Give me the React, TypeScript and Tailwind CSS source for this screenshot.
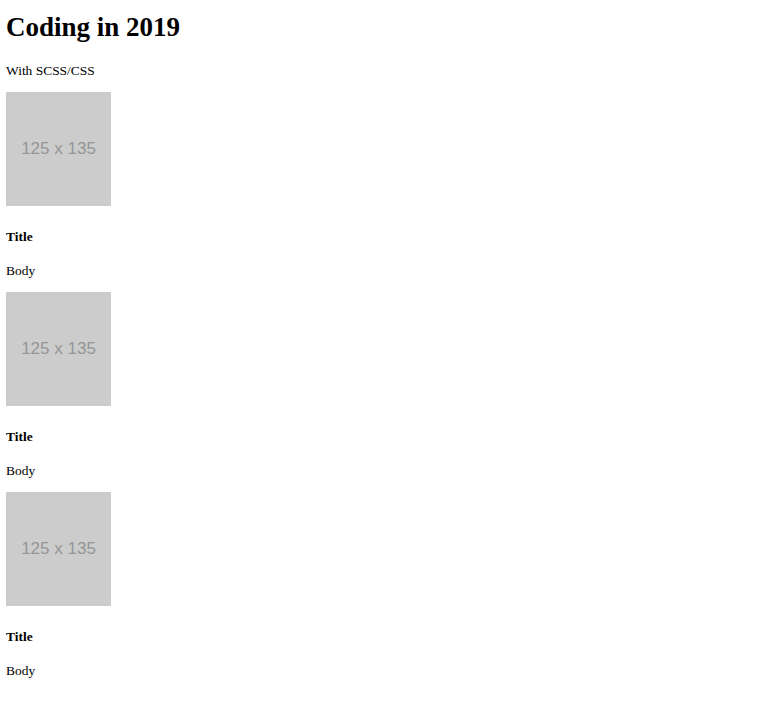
import React from "react";

function Card() {
  return (
    <div className="flex flex-col">
      <div className="w-[105px] h-[114px] bg-[#cccccc] flex items-center justify-center">
        <span className="text-[17px] leading-[20px] text-[#969696]" style={{ fontFamily: '"Liberation Sans", Arial, sans-serif' }}>
          125 x 135
        </span>
      </div>
      <h4 className="mt-[23px] text-[13.44px] leading-[16px] font-bold h-[16px]">Title</h4>
      <p className="mt-[18px] text-[13.44px] leading-[16px] h-[16px] mb-[13px]">Body</p>
    </div>
  );
}

export default function App() {
  return (
    <div
      className="min-h-[709px] bg-white text-black pl-[6px] pt-[11px]"
      style={{ fontFamily: '"Liberation Serif", "Times New Roman", serif' }}
    >
      <h1 className="text-[27px] leading-[32px] font-bold">Coding in 2019</h1>
      <p className="mt-[20px] text-[13.44px] leading-[16px]">With SCSS/CSS</p>
      <div className="mt-[13px] flex flex-col">
        <Card />
        <Card />
        <Card />
      </div>
    </div>
  );
}
